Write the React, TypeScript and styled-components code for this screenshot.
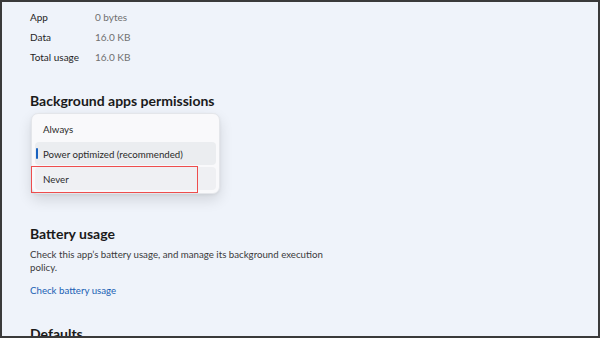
import styled, { createGlobalStyle } from "styled-components";

const GlobalStyle = createGlobalStyle`
  html, body {
    margin: 0;
    padding: 0;
    background: #2b2b2b;
  }
  * {
    box-sizing: border-box;
  }
`;

const usage = [
  { label: "App", value: "0 bytes" },
  { label: "Data", value: "16.0 KB" },
  { label: "Total usage", value: "16.0 KB" },
];

const options = [
  { label: "Always", selected: false, outlined: false },
  { label: "Power optimized (recommended)", selected: true, outlined: false },
  { label: "Never", selected: false, outlined: true },
];

const App = () => {
  return (
    <>
      <GlobalStyle />
      <Frame>
        <Content>
          <UsageList>
            {usage.map((row) => (
              <UsageRow key={row.label}>
                <UsageLabel>{row.label}</UsageLabel>
                <UsageValue>{row.value}</UsageValue>
              </UsageRow>
            ))}
          </UsageList>

          <Heading>Background apps permissions</Heading>
          <FlyoutArea>
            <Flyout>
              {options.map((opt) => (
                <Option
                  key={opt.label}
                  $selected={opt.selected}
                  $hoverish={opt.outlined}
                >
                  {opt.selected && <Indicator />}
                  {opt.label}
                  {opt.outlined && <Highlight />}
                </Option>
              ))}
            </Flyout>
          </FlyoutArea>

          <Heading>Battery usage</Heading>
          <Description>
            Check this app’s battery usage, and manage its background execution
            policy.
          </Description>
          <Link>Check battery usage</Link>

          <Heading $spaced>Defaults</Heading>
        </Content>
      </Frame>
    </>
  );
};

export default App;

const Frame = styled.div`
  width: 600px;
  height: 338px;
  border: 2px solid #3a3a3a;
  background: #eff3fa;
  overflow: hidden;
  font-family: Lato, "Open Sans", sans-serif;
  color: #1b1b1b;
`;

const Content = styled.div`
  padding: 5px 0 0 28px;
  display: flex;
  flex-direction: column;
`;

const UsageList = styled.div`
  display: flex;
  flex-direction: column;
`;

const UsageRow = styled.div`
  display: flex;
  align-items: center;
  height: 20px;
  font-size: 10px;
`;

const UsageLabel = styled.span`
  width: 65px;
  color: #1f1f1f;
`;

const UsageValue = styled.span`
  color: #707070;
`;

const Heading = styled.h2<{ $spaced?: boolean }>`
  margin: ${(p) => (p.$spaced ? "27px" : "24px")} 0 0 0;
  font-size: 14px;
  font-weight: 700;
  line-height: 20px;
  color: #1a1a1a;
`;

const FlyoutArea = styled.div`
  position: relative;
  height: 89px;
`;

const Flyout = styled.div`
  position: absolute;
  left: 1px;
  top: 2px;
  width: 189px;
  padding: 3px;
  background: #f9f9fb;
  border: 1px solid #e4e6ea;
  border-radius: 7px;
  box-shadow: 0 6px 14px rgba(0, 0, 0, 0.12), 0 1px 3px rgba(0, 0, 0, 0.06);
  display: flex;
  flex-direction: column;
  gap: 2px;
`;

const Option = styled.div<{ $selected: boolean; $hoverish: boolean }>`
  position: relative;
  height: 23px;
  display: flex;
  align-items: center;
  padding-left: 8px;
  border-radius: 4px;
  font-size: 9.7px;
  color: #2a2a2a;
  background: ${(p) =>
    p.$selected ? "#ebedf0" : p.$hoverish ? "#eff0f3" : "transparent"};
`;

const Indicator = styled.span`
  position: absolute;
  left: 1px;
  top: 6px;
  width: 2px;
  height: 11px;
  border-radius: 1px;
  background: #1a62c0;
`;

const Highlight = styled.span`
  position: absolute;
  left: -4px;
  top: -1px;
  width: 167px;
  height: 27px;
  border: 1.5px solid #ee4d4d;
  pointer-events: none;
`;

const Description = styled.p`
  margin: 4px 0 0 0;
  width: 310px;
  font-size: 9.7px;
  line-height: 12.5px;
  color: #3a3a3a;
`;

const Link = styled.a`
  margin-top: 10px;
  font-size: 9.7px;
  line-height: 14px;
  color: #1a5fb4;
  cursor: pointer;
`;
